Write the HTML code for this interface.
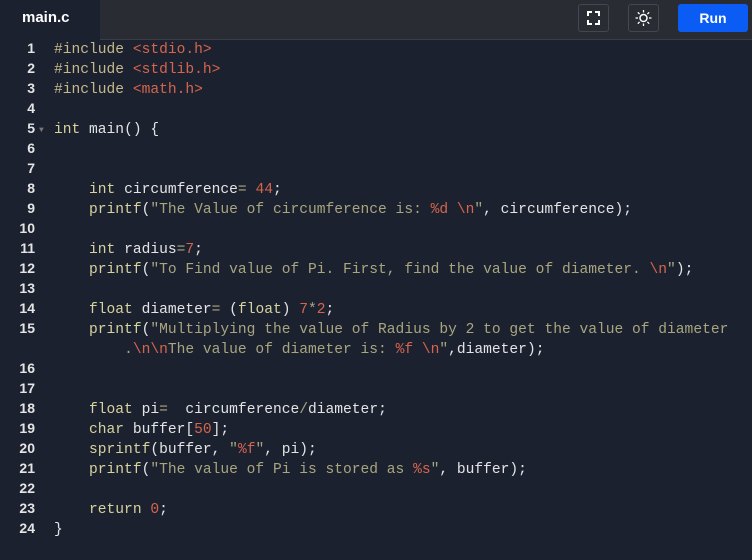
<!DOCTYPE html>
<html><head><meta charset="utf-8"><style>
body{margin:0;width:752px;height:541px;background:#1c2130;overflow:hidden;font-family:"Liberation Sans",sans-serif}
.hdr{position:absolute;left:0;top:0;width:752px;height:39px;background:#2a2c33;border-bottom:1px solid #3a3d46}
.tab{position:absolute;left:0;top:0;width:100px;height:40px;background:#1c2130;color:#fff;font-weight:bold;font-size:15px;line-height:36px;padding-left:22px;box-sizing:border-box}
.btn{position:absolute;top:4px;width:31px;height:28px;border:1px solid #444750;border-radius:3px;box-sizing:border-box}
.run{position:absolute;left:678px;top:4px;width:70px;height:28px;background:#0a5cf5;border-radius:3px;color:#fff;font-weight:bold;font-size:14px;text-align:center;line-height:28px}
.code{position:absolute;left:0;top:40px;font-family:"Liberation Mono",monospace;font-size:14.6px;line-height:20px;color:#e4e4e4;white-space:pre}
.ln{position:absolute;left:0;width:35px;text-align:right;color:#e4e4e4;font-weight:bold;font-family:"Liberation Sans",sans-serif;font-size:14px;margin-top:-2px}
.l{position:absolute;left:54px}
.k{color:#d6d39e}.s{color:#a8a67e}.r{color:#d5654d}.p{color:#c5b88a}.o{color:#a8a67e}
.fold{position:absolute;left:39px;top:0;color:#777;font-size:8px;line-height:18px}
</style></head><body>
<div class="hdr"></div>
<div class="tab">main.c</div>
<div class="btn" style="left:578px"><svg width="29" height="26" viewBox="0 0 29 26"><path d="M9 11V7h4M16 7h4v4M20 15v4h-4M13 19H9v-4" fill="none" stroke="#fff" stroke-width="2"/></svg></div>
<div class="btn" style="left:628px"><svg width="29" height="26" viewBox="0 0 29 26"><circle cx="14.5" cy="13" r="3.5" fill="none" stroke="#fff" stroke-width="1.5"/><path d="M14.5 5v2.5M14.5 18.5V21M6.5 13H9M20 13h2.5M8.8 7.3l1.8 1.8M18.4 16.9l1.8 1.8M8.8 18.7l1.8-1.8M18.4 9.1l1.8-1.8" stroke="#fff" stroke-width="1.3"/></svg></div>
<div class="run">Run</div>
<div class="code">
<div class="ln" style="top:0">1</div><div class="l" style="top:0"><span class="p">#include</span> <span class="r">&lt;stdio.h&gt;</span></div>
<div class="ln" style="top:20px">2</div><div class="l" style="top:20px"><span class="p">#include</span> <span class="r">&lt;stdlib.h&gt;</span></div>
<div class="ln" style="top:40px">3</div><div class="l" style="top:40px"><span class="p">#include</span> <span class="r">&lt;math.h&gt;</span></div>
<div class="ln" style="top:60px">4</div>
<div class="ln" style="top:80px">5</div><div style="position:absolute;top:82px;left:0"><span class="fold">▼</span></div><div class="l" style="top:80px"><span class="k">int</span> main() {</div>
<div class="ln" style="top:100px">6</div>
<div class="ln" style="top:120px">7</div>
<div class="ln" style="top:140px">8</div><div class="l" style="top:140px">    <span class="k">int</span> circumference<span class="o">=</span> <span class="r">44</span>;</div>
<div class="ln" style="top:160px">9</div><div class="l" style="top:160px">    <span class="k">printf</span>(<span class="s">"The Value of circumference is: </span><span class="r">%d \n</span><span class="s">"</span>, circumference);</div>
<div class="ln" style="top:180px">10</div>
<div class="ln" style="top:200px">11</div><div class="l" style="top:200px">    <span class="k">int</span> radius<span class="o">=</span><span class="r">7</span>;</div>
<div class="ln" style="top:220px">12</div><div class="l" style="top:220px">    <span class="k">printf</span>(<span class="s">"To Find value of Pi. First, find the value of diameter. </span><span class="r">\n</span><span class="s">"</span>);</div>
<div class="ln" style="top:240px">13</div>
<div class="ln" style="top:260px">14</div><div class="l" style="top:260px">    <span class="k">float</span> diameter<span class="o">=</span> (<span class="k">float</span>) <span class="r">7</span><span class="o">*</span><span class="r">2</span>;</div>
<div class="ln" style="top:280px">15</div><div class="l" style="top:280px">    <span class="k">printf</span>(<span class="s">"Multiplying the value of Radius by 2 to get the value of diameter</span></div>
<div class="l" style="top:300px">        <span class="s">.</span><span class="r">\n\n</span><span class="s">The value of diameter is: </span><span class="r">%f \n</span><span class="s">"</span>,diameter);</div>
<div class="ln" style="top:320px">16</div>
<div class="ln" style="top:340px">17</div>
<div class="ln" style="top:360px">18</div><div class="l" style="top:360px">    <span class="k">float</span> pi<span class="o">=</span>  circumference<span class="o">/</span>diameter;</div>
<div class="ln" style="top:380px">19</div><div class="l" style="top:380px">    <span class="k">char</span> buffer[<span class="r">50</span>];</div>
<div class="ln" style="top:400px">20</div><div class="l" style="top:400px">    <span class="k">sprintf</span>(buffer, <span class="s">"</span><span class="r">%f</span><span class="s">"</span>, pi);</div>
<div class="ln" style="top:420px">21</div><div class="l" style="top:420px">    <span class="k">printf</span>(<span class="s">"The value of Pi is stored as </span><span class="r">%s</span><span class="s">"</span>, buffer);</div>
<div class="ln" style="top:440px">22</div>
<div class="ln" style="top:460px">23</div><div class="l" style="top:460px">    <span class="k">return</span> <span class="r">0</span>;</div>
<div class="ln" style="top:480px">24</div><div class="l" style="top:480px">}</div>
</div>
</body></html>
